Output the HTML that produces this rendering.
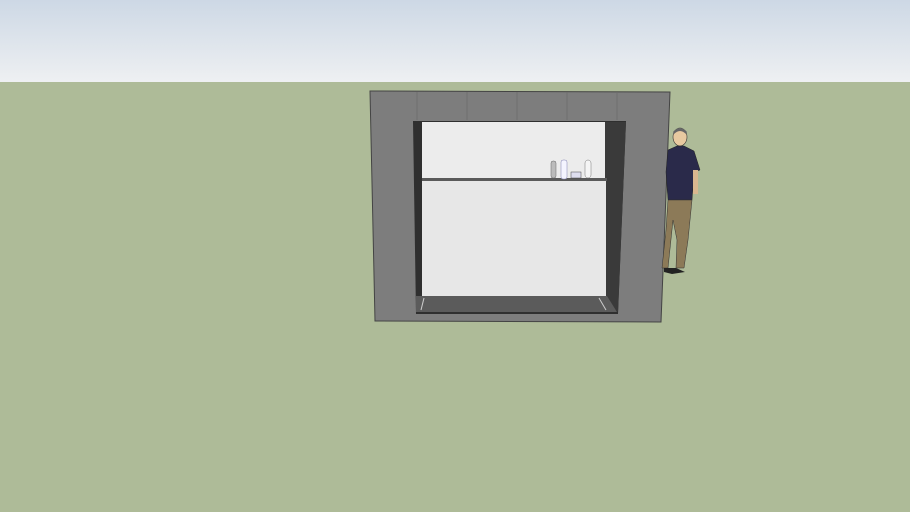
<!DOCTYPE html>
<html><head><style>
html,body{margin:0;padding:0;width:910px;height:512px;overflow:hidden;background:#aebb98}
</style></head><body>
<svg width="910" height="512" xmlns="http://www.w3.org/2000/svg">
<defs><linearGradient id="sky" x1="0" y1="0" x2="0" y2="1">
<stop offset="0" stop-color="#cdd8e5"/><stop offset="1" stop-color="#eef0f2"/></linearGradient></defs>
<rect width="910" height="82" fill="url(#sky)"/>
<rect y="82" width="910" height="430" fill="#aebb98"/>
<!-- wall -->
<polygon points="370,91 670,92 661,322 375,321" fill="#7d7d7d" stroke="#444" stroke-width="1"/>
<g stroke="#6e6e6e" stroke-width="1.5" opacity="0.6">
<line x1="417" y1="92" x2="417" y2="120"/><line x1="467" y1="92" x2="467" y2="120"/>
<line x1="517" y1="92" x2="517" y2="120"/><line x1="567" y1="92" x2="567" y2="120"/>
<line x1="617" y1="92" x2="617" y2="120"/></g>
<!-- opening -->
<polygon points="413,121 626,121 618,314 416,314" fill="#2f2f2f"/>
<polygon points="605,122 626,122 618,312 605,300" fill="#3a3a3a"/>
<rect x="422" y="122" width="183" height="56" fill="#ececec"/>
<rect x="422" y="178" width="185" height="3" fill="#5a5a5a"/>
<rect x="422" y="181" width="184" height="115" fill="#e7e7e7"/>
<polygon points="416,296 607,296 617,312 416,312" fill="#5b5b5b"/>
<line x1="424" y1="298" x2="421" y2="310" stroke="#ccc"/><line x1="599" y1="298" x2="606" y2="310" stroke="#ccc"/>
<!-- bottles -->
<rect x="551" y="161" width="5" height="17" rx="2" fill="#bbb" stroke="#666" stroke-width=".5"/>
<rect x="561" y="160" width="6" height="19" rx="2" fill="#f4f4ff" stroke="#8080b0" stroke-width=".5"/>
<rect x="571" y="172" width="10" height="6" fill="#dde" stroke="#444" stroke-width=".5"/>
<rect x="585" y="160" width="6" height="18" rx="3" fill="#f5f5f5" stroke="#777" stroke-width=".5"/>
<!-- person -->
<ellipse cx="680" cy="137" rx="7" ry="9" fill="#e8c9a0" stroke="#333" stroke-width=".6"/>
<path d="M673,132 Q680,124 687,132 L686,134 Q680,128 674,134Z" fill="#666"/>
<path d="M668,150 L677,146 L684,146 L694,151 L700,170 L694,172 L692,200 L668,200 L666,172Z" fill="#2a2a4a" stroke="#222" stroke-width=".5"/>
<path d="M668,200 L692,200 L688,240 L684,268 L676,268 L677,240 L673,220 L668,268 L662,268 L666,230Z" fill="#8c7a58" stroke="#333" stroke-width=".5"/>
<path d="M664,268 L676,268 L685,272 L672,274 L664,272Z" fill="#222"/>
<rect x="693" y="170" width="5" height="24" fill="#d9b78f"/>
</svg>
</body></html>
